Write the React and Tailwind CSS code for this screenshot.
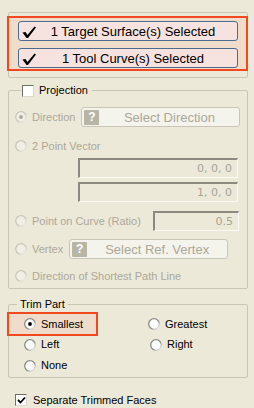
import React from "react";

const FONT = { fontFamily: '"Liberation Sans", Arial, sans-serif' };

function Check({ className = "" }) {
  return (
    <svg width="16" height="14" viewBox="0 0 16 14" className={className}>
      <path d="M1.5 7.5 L4.5 7 L6.5 10 L13.5 1.5 L15 2.5 L7 13 L5.5 13 Z" fill="#000" />
    </svg>
  );
}

function Radio({ checked = false, disabled = false }) {
  const stroke1 = disabled ? "#c9c6b6" : "#8a8a84";
  const stroke2 = disabled ? "#f4f3ec" : "#ffffff";
  const fill = disabled ? "#f1efe4" : "#ffffff";
  return (
    <svg width="12" height="12" viewBox="0 0 12 12" className="shrink-0">
      <defs>
        <linearGradient id={disabled ? "rgd" : "rge"} x1="0" y1="0" x2="1" y2="1">
          <stop offset="0" stopColor={stroke1} />
          <stop offset="0.55" stopColor={stroke1} />
          <stop offset="1" stopColor={stroke2} />
        </linearGradient>
      </defs>
      <circle cx="6" cy="6" r="5.3" fill={fill} stroke={`url(#${disabled ? "rgd" : "rge"})`} strokeWidth="1.3" />
      {checked && <circle cx="6" cy="6" r="1.9" fill={disabled ? "#aca899" : "#000"} />}
    </svg>
  );
}

function CheckBox({ checked = false }) {
  return (
    <div className="w-[12px] h-[12px] shrink-0 bg-white border-t border-l border-t-[#6f6f6a] border-l-[#6f6f6a] border-b border-r border-b-[#dcdad0] border-r-[#dcdad0] flex items-center justify-center">
      {checked && (
        <svg width="9" height="9" viewBox="0 0 9 9">
          <path d="M1 4 L3.5 6.5 L8 1.5" fill="none" stroke="#000" strokeWidth="1.8" />
        </svg>
      )}
    </div>
  );
}

function SelBtn({ label, w }) {
  return (
    <div className={`${w} h-[20px] rounded-[3px] border border-[#c9c6b8] bg-[#f4f3ec] flex items-center`}>
      <div className="ml-[2px] w-[15px] h-[15px] bg-[#b8b5a6] rounded-[1px] flex items-center justify-center text-white font-bold text-[12px] leading-none">?</div>
      <div className="flex-1 text-center text-[13px] text-[#aca899] leading-none">{label}</div>
    </div>
  );
}

function TextBox({ value, w }) {
  return (
    <div className={`${w} h-[20px] border-t-2 border-l-2 border-t-[#8c8a80] border-l-[#8c8a80] border-b border-r border-b-[#fbfaf6] border-r-[#fbfaf6] bg-[#ece9d8] flex items-center justify-end pr-[5px] text-[#a7a497]`} style={{ fontFamily: '"DejaVu Sans", sans-serif', fontSize: 11 }}>
      {value}
    </div>
  );
}

function DisRow({ label, checked, children, className = "" }) {
  return (
    <div className={`flex items-center h-[20px] ${className}`}>
      <Radio disabled checked={checked} />
      <span className="ml-[5px] text-[#aca899]">{label}</span>
      {children}
    </div>
  );
}

export default function App() {
  return (
    <div className="w-[254px] h-[408px] bg-[#ece9d8] text-[11px] leading-none text-black overflow-hidden flex flex-col" style={FONT}>
      {/* Top group */}
      <div className="mt-[12px] ml-[8px] w-[240px] h-[66px] border border-[#c8c6b5] rounded-[2px] flex flex-col">
        <div className="mt-[3px] -ml-[2px] w-[241px] h-[55px] border-2 border-[#f2481f] bg-[#f0dcca] flex flex-col items-start pl-[9px] pt-[3px] gap-[7px]">
          <div className="w-[220px] h-[20px] rounded-[3px] border border-[#4d6b8e] bg-[#f6e2de] flex items-center relative">
            <Check className="absolute left-[2px] top-[3px]" />
            <span className="flex-1 text-center text-[13px] pl-[10px]">1 Target Surface(s) Selected</span>
          </div>
          <div className="w-[220px] h-[20px] rounded-[3px] border border-[#4d6b8e] bg-[#f6e2de] flex items-center relative">
            <Check className="absolute left-[2px] top-[3px]" />
            <span className="flex-1 text-center text-[13px] pl-[10px]">1 Tool Curve(s) Selected</span>
          </div>
        </div>
      </div>

      {/* Projection */}
      <fieldset className="mt-[6px] ml-[8px] w-[240px] border border-[#c8c6b5] rounded-[2px] pl-[6px] pb-[2px]">
        <legend className="ml-[6px] px-[1px] flex items-center gap-[5px] h-[13px]">
          <CheckBox />
          <span className="pr-[3px]">Projection</span>
        </legend>
        <DisRow label="Direction" checked className="mt-[10px]">
          <div className="ml-[6px]">
            <SelBtn label="Select Direction" w="w-[159px]" />
          </div>
        </DisRow>
        <DisRow label="2 Point Vector" className="mt-[9px]" />
        <div className="mt-[2px] ml-[63px]">
          <TextBox value="0, 0, 0" w="w-[160px]" />
        </div>
        <div className="mt-[4px] ml-[63px]">
          <TextBox value="1, 0, 0" w="w-[160px]" />
        </div>
        <DisRow label="Point on Curve (Ratio)" className="mt-[9px]">
          <div className="ml-auto mr-[8px]">
            <TextBox value="0.5" w="w-[86px]" />
          </div>
        </DisRow>
        <DisRow label="Vertex" className="mt-[8px]">
          <div className="ml-[6px]">
            <SelBtn label="Select Ref. Vertex" w="w-[159px]" />
          </div>
        </DisRow>
        <DisRow label="Direction of Shortest Path Line" className="mt-[7px]" />
      </fieldset>

      {/* Trim Part */}
      <fieldset className="mt-[9px] ml-[8px] w-[240px] h-[80px] border border-[#c8c6b5] rounded-[2px]">
        <legend className="ml-[8px] px-[3px] h-[13px] flex items-center">Trim Part</legend>
        <div className="flex items-center mt-[1px]">
          <div className="-ml-[2px] w-[91px] h-[24px] border-2 border-[#f2481f] bg-[#f0dcca] flex items-center pl-[15px]">
            <Radio checked />
            <span className="ml-[5px]">Smallest</span>
          </div>
          <div className="ml-[50px] flex items-center">
            <Radio />
            <span className="ml-[5px]">Greatest</span>
          </div>
        </div>
        <div className="flex items-center h-[21px] mt-[-2px]">
          <div className="ml-[15px] w-[76px] flex items-center">
            <Radio />
            <span className="ml-[5px]">Left</span>
          </div>
          <div className="ml-[50px] flex items-center">
            <Radio />
            <span className="ml-[5px]">Right</span>
          </div>
        </div>
        <div className="flex items-center h-[21px]">
          <div className="ml-[15px] flex items-center">
            <Radio />
            <span className="ml-[5px]">None</span>
          </div>
        </div>
      </fieldset>

      <div className="mt-[16px] ml-[15px] flex items-center gap-[6px]">
        <CheckBox checked />
        <span>Separate Trimmed Faces</span>
      </div>
    </div>
  );
}
